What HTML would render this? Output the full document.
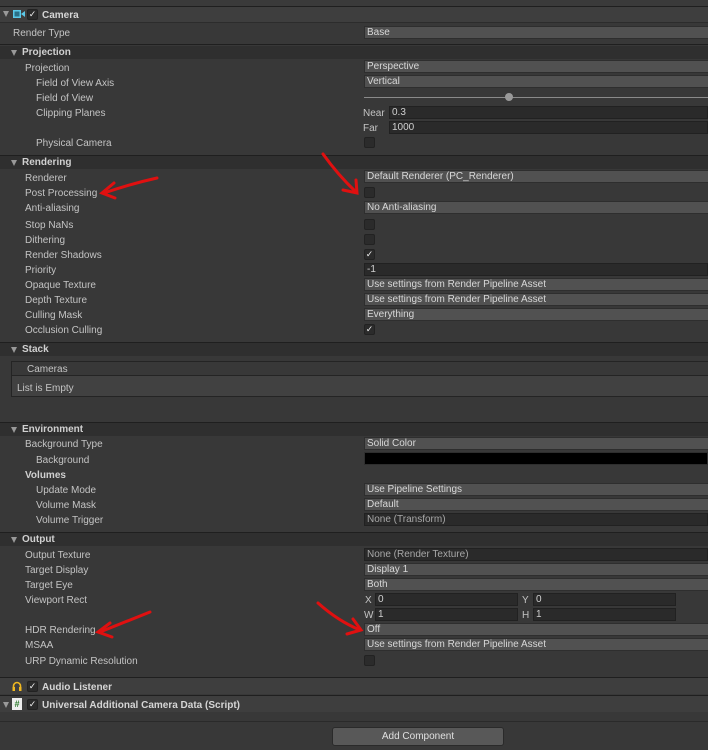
<!DOCTYPE html>
<html><head><meta charset="utf-8"><style>
*{margin:0;padding:0;box-sizing:border-box}
body{width:708px;height:750px;background:#383838;font-family:"Liberation Sans",sans-serif;font-size:10px;color:#c4c4c4;position:relative;overflow:hidden}
.a{position:absolute}
.l{position:absolute;white-space:nowrap;line-height:15px;height:15px;margin-top:1px}
.hd{position:absolute;left:0;width:708px;height:13px;background:#2f2f2f}
.hd span{position:absolute;left:22px;top:0;line-height:13px;font-weight:bold;color:#d0d0d0}
.tri{position:absolute;left:11px;top:4px;width:0;height:0;border-left:3.5px solid transparent;border-right:3.5px solid transparent;border-top:6px solid #999}
.ln{position:absolute;left:0;width:708px;height:1px;background:#1f1f1f}
.dd{position:absolute;left:364px;width:344px;height:13px;background:#515151;border:1px solid #2e2e2e;border-right:none;padding-left:2px;line-height:12px;color:#d8d8d8;white-space:nowrap}
.tf{position:absolute;height:13px;background:#2a2a2a;border:1px solid #212121;padding-left:2px;line-height:12px;color:#d0d0d0;white-space:nowrap}
.cb{position:absolute;left:364px;width:11px;height:11px;background:#2b2b2b;border:1px solid #222;border-radius:2px;color:#eee;font-size:9px;line-height:9px;text-align:center}
</style></head><body>
<div class="a" style="left:0;top:0;width:708px;height:6px;background:#3a3a3a"></div>
<div class="ln" style="top:6px"></div>
<div class="a" style="left:0;top:7px;width:708px;height:15px;background:#3e3e3e"></div>
<div class="tri" style="left:3px;top:11px"></div>
<svg class="a" style="left:13px;top:9px" width="12" height="10"><rect x="0" y="1" width="8" height="8" fill="#5bc8e8"/><path d="M8 5 L12 2 L12 8 Z" fill="#5bc8e8"/><rect x="1.5" y="2.5" width="5" height="5" fill="#2a6f86"/></svg>
<div class="cb" style="left:27px;top:9px">✓</div>
<div class="l" style="left:42px;top:7px;font-weight:bold;color:#d6d6d6">Camera</div>
<div class="ln" style="top:22px;background:#2c2c2c"></div>
<div class="l" style="left:13px;top:25px">Render Type</div>
<div class="dd" style="top:26px">Base</div>
<div class="ln" style="top:44px"></div>

<div class="hd" style="top:46px"><div class="tri"></div><span>Projection</span></div>
<div class="l" style="left:25px;top:60px">Projection</div><div class="dd" style="top:60px">Perspective</div>
<div class="l" style="left:36px;top:75px">Field of View Axis</div><div class="dd" style="top:75px">Vertical</div>
<div class="l" style="left:36px;top:90px">Field of View</div>
<div class="a" style="left:364px;top:97px;width:344px;height:1px;background:#8a8a8a"></div>
<div class="a" style="left:505px;top:93px;width:8px;height:8px;border-radius:50%;background:#999"></div>
<div class="l" style="left:36px;top:105px">Clipping Planes</div>
<div class="l" style="left:363px;top:105px">Near</div><div class="tf" style="left:389px;top:106px;width:319px">0.3</div>
<div class="l" style="left:363px;top:120px">Far</div><div class="tf" style="left:389px;top:121px;width:319px">1000</div>
<div class="l" style="left:36px;top:135px">Physical Camera</div><div class="cb" style="top:137px"></div>
<div class="ln" style="top:155px"></div>

<div class="hd" style="top:156px"><div class="tri"></div><span>Rendering</span></div>
<div class="l" style="left:25px;top:170px">Renderer</div><div class="dd" style="top:170px">Default Renderer (PC_Renderer)</div>
<div class="l" style="left:25px;top:185px">Post Processing</div><div class="cb" style="top:187px"></div>
<div class="l" style="left:25px;top:200px">Anti-aliasing</div><div class="dd" style="top:201px">No Anti-aliasing</div>
<div class="l" style="left:25px;top:217px">Stop NaNs</div><div class="cb" style="top:219px"></div>
<div class="l" style="left:25px;top:232px">Dithering</div><div class="cb" style="top:234px"></div>
<div class="l" style="left:25px;top:247px">Render Shadows</div><div class="cb" style="top:249px">✓</div>
<div class="l" style="left:25px;top:262px">Priority</div><div class="tf" style="left:364px;top:263px;width:344px">-1</div>
<div class="l" style="left:25px;top:277px">Opaque Texture</div><div class="dd" style="top:278px">Use settings from Render Pipeline Asset</div>
<div class="l" style="left:25px;top:292px">Depth Texture</div><div class="dd" style="top:293px">Use settings from Render Pipeline Asset</div>
<div class="l" style="left:25px;top:307px">Culling Mask</div><div class="dd" style="top:308px">Everything</div>
<div class="l" style="left:25px;top:322px">Occlusion Culling</div><div class="cb" style="top:324px">✓</div>
<div class="ln" style="top:342px"></div>

<div class="hd" style="top:343px"><div class="tri"></div><span>Stack</span></div>
<div class="a" style="left:11px;top:361px;width:697px;height:36px;border:1px solid #242424;border-right:none;background:#414141"></div>
<div class="a" style="left:12px;top:362px;width:696px;height:14px;background:#383838;border-bottom:1px solid #242424"></div>
<div class="l" style="left:27px;top:361px">Cameras</div>
<div class="l" style="left:17px;top:380px">List is Empty</div>
<div class="ln" style="top:422px"></div>

<div class="hd" style="top:423px"><div class="tri"></div><span>Environment</span></div>
<div class="l" style="left:25px;top:436px">Background Type</div><div class="dd" style="top:437px">Solid Color</div>
<div class="l" style="left:36px;top:452px">Background</div><div class="a" style="left:364px;top:452px;width:344px;height:13px;background:#000;border:1px solid #2e2e2e"></div>
<div class="l" style="left:25px;top:467px;font-weight:bold;color:#d0d0d0">Volumes</div>
<div class="l" style="left:36px;top:482px">Update Mode</div><div class="dd" style="top:483px">Use Pipeline Settings</div>
<div class="l" style="left:36px;top:497px">Volume Mask</div><div class="dd" style="top:498px">Default</div>
<div class="l" style="left:36px;top:512px">Volume Trigger</div><div class="tf" style="left:364px;top:513px;width:344px;color:#a8a8a8">None (Transform)</div>
<div class="ln" style="top:532px"></div>

<div class="hd" style="top:533px"><div class="tri"></div><span>Output</span></div>
<div class="l" style="left:25px;top:547px">Output Texture</div><div class="tf" style="left:364px;top:548px;width:344px;color:#a8a8a8">None (Render Texture)</div>
<div class="l" style="left:25px;top:562px">Target Display</div><div class="dd" style="top:563px">Display 1</div>
<div class="l" style="left:25px;top:577px">Target Eye</div><div class="dd" style="top:578px">Both</div>
<div class="l" style="left:25px;top:592px">Viewport Rect</div>
<div class="l" style="left:365px;top:592px">X</div><div class="tf" style="left:375px;top:593px;width:143px">0</div>
<div class="l" style="left:522px;top:592px">Y</div><div class="tf" style="left:533px;top:593px;width:143px">0</div>
<div class="l" style="left:364px;top:607px">W</div><div class="tf" style="left:375px;top:608px;width:143px">1</div>
<div class="l" style="left:522px;top:607px">H</div><div class="tf" style="left:533px;top:608px;width:143px">1</div>
<div class="l" style="left:25px;top:622px">HDR Rendering</div><div class="dd" style="top:623px">Off</div>
<div class="l" style="left:25px;top:637px">MSAA</div><div class="dd" style="top:638px">Use settings from Render Pipeline Asset</div>
<div class="l" style="left:25px;top:653px">URP Dynamic Resolution</div><div class="cb" style="top:655px"></div>
<div class="ln" style="top:677px"></div>

<div class="a" style="left:0;top:678px;width:708px;height:16px;background:#3e3e3e"></div>
<svg class="a" style="left:12px;top:681px" width="10" height="11"><path d="M1.5 9 V5 A3.5 3.5 0 0 1 8.5 5 V9" stroke="#f0b820" stroke-width="1.6" fill="none"/><rect x="0.5" y="6" width="2.5" height="4" fill="#f0b820"/><rect x="7" y="6" width="2.5" height="4" fill="#f0b820"/></svg>
<div class="cb" style="left:27px;top:681px">✓</div>
<div class="l" style="left:42px;top:679px;font-weight:bold;color:#d6d6d6">Audio Listener</div>
<div class="ln" style="top:695px"></div>
<div class="a" style="left:0;top:696px;width:708px;height:16px;background:#3e3e3e"></div>
<div class="tri" style="left:3px;top:702px"></div>
<div class="a" style="left:12px;top:698px;width:10px;height:12px;background:#eee;color:#2a7a2a;font-size:9px;font-weight:bold;text-align:center;line-height:12px">#</div>
<div class="cb" style="left:27px;top:699px">✓</div>
<div class="l" style="left:42px;top:697px;font-weight:bold;color:#d6d6d6">Universal Additional Camera Data (Script)</div>
<div class="ln" style="top:721px;background:#2a2a2a"></div>
<div class="a" style="left:332px;top:727px;width:172px;height:19px;background:#585858;border:1px solid #2a2a2a;border-radius:3px;text-align:center;line-height:18px;color:#e0e0e0">Add Component</div>

<svg class="a" style="left:0;top:0" width="708" height="750" fill="none" stroke="#e01010" stroke-width="3" stroke-linecap="round">
<path d="M157 178 Q130 184 104 193"/><path d="M114 183 L102 193 L115 198"/>
<path d="M323 154 Q338 175 356 192"/><path d="M343 190 L357 193 L356 180"/>
<path d="M150 612 Q125 622 100 632"/><path d="M110 623 L98 632 L112 637"/>
<path d="M318 603 Q338 621 360 630"/><path d="M347 634 L361 630 L353 619"/>
</svg>
</body></html>
